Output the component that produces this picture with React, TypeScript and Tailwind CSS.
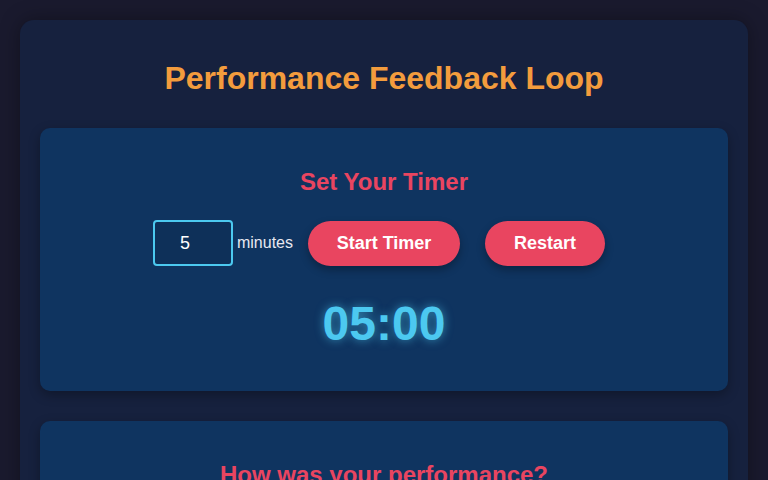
import React, { useState } from 'react';

const App = () => {
  const [minutes, setMinutes] = useState('5');

  const mins = Math.max(0, parseInt(minutes || '0', 10) || 0);
  const display = `${String(mins).padStart(2, '0')}:00`;

  return (
    <div className="min-h-screen bg-[#1a1a2e] p-5 font-['Liberation_Sans',Arial,sans-serif] text-[#e0e0e0]">
      <div className="bg-[#16213e] rounded-[14px] px-5 pt-5 pb-5 shadow-[0_0_20px_rgba(0,0,0,0.35)]">
        <h1 className="mt-5 mb-[31px] text-center text-[32px] leading-[normal] font-bold text-[#f39c3d]">
          Performance Feedback Loop
        </h1>

        {/* Timer */}
        <section className="bg-[#0f3460] rounded-[10px] p-5 mb-[30px] text-center shadow-[0_4px_12px_rgba(0,0,0,0.3)]">
          <h2 className="mt-5 text-[24px] leading-[normal] font-bold text-[#e94560]">Set Your Timer</h2>
          <div className="mt-6 flex items-center justify-center">
            <input
              type="number"
              value={minutes}
              onChange={(e) => setMinutes(e.target.value)}
              className="w-[80px] h-[46px] pl-[25px] bg-[#0e3059] border-2 border-[#4cc9f0] rounded-[4px] text-[18px] text-white outline-none [appearance:textfield]"
            />
            <span className="ml-[4px] text-[16px] text-[#e8e8f0]">minutes</span>
            <button className="ml-[15px] w-[152px] h-[45px] rounded-full bg-[#e94560] text-white text-[18px] font-bold shadow-[0_4px_8px_rgba(0,0,0,0.3)]">
              Start Timer
            </button>
            <button className="ml-[25px] mr-[10px] w-[120px] h-[45px] rounded-full bg-[#e94560] text-white text-[18px] font-bold shadow-[0_4px_8px_rgba(0,0,0,0.3)]">
              Restart
            </button>
          </div>
          <div className="mt-[30px] mb-[20px] text-[48px] leading-[normal] font-bold text-[#4cc9f0] [text-shadow:0_0_10px_rgba(76,201,240,0.6)]">
            {display}
          </div>
        </section>

        {/* Feedback */}
        <section className="bg-[#0f3460] rounded-[10px] p-5 text-center shadow-[0_4px_12px_rgba(0,0,0,0.3)]">
          <h2 className="my-5 text-[24px] leading-[normal] font-bold text-[#e94560]">How was your performance?</h2>
          <div className="flex justify-center gap-4 pb-4">
            {['😞', '😐', '🙂', '😄'].map((e) => (
              <button key={e} className="w-12 h-12 rounded-full bg-[#16213e] text-2xl">
                {e}
              </button>
            ))}
          </div>
        </section>
      </div>
    </div>
  );
};

export default App;
